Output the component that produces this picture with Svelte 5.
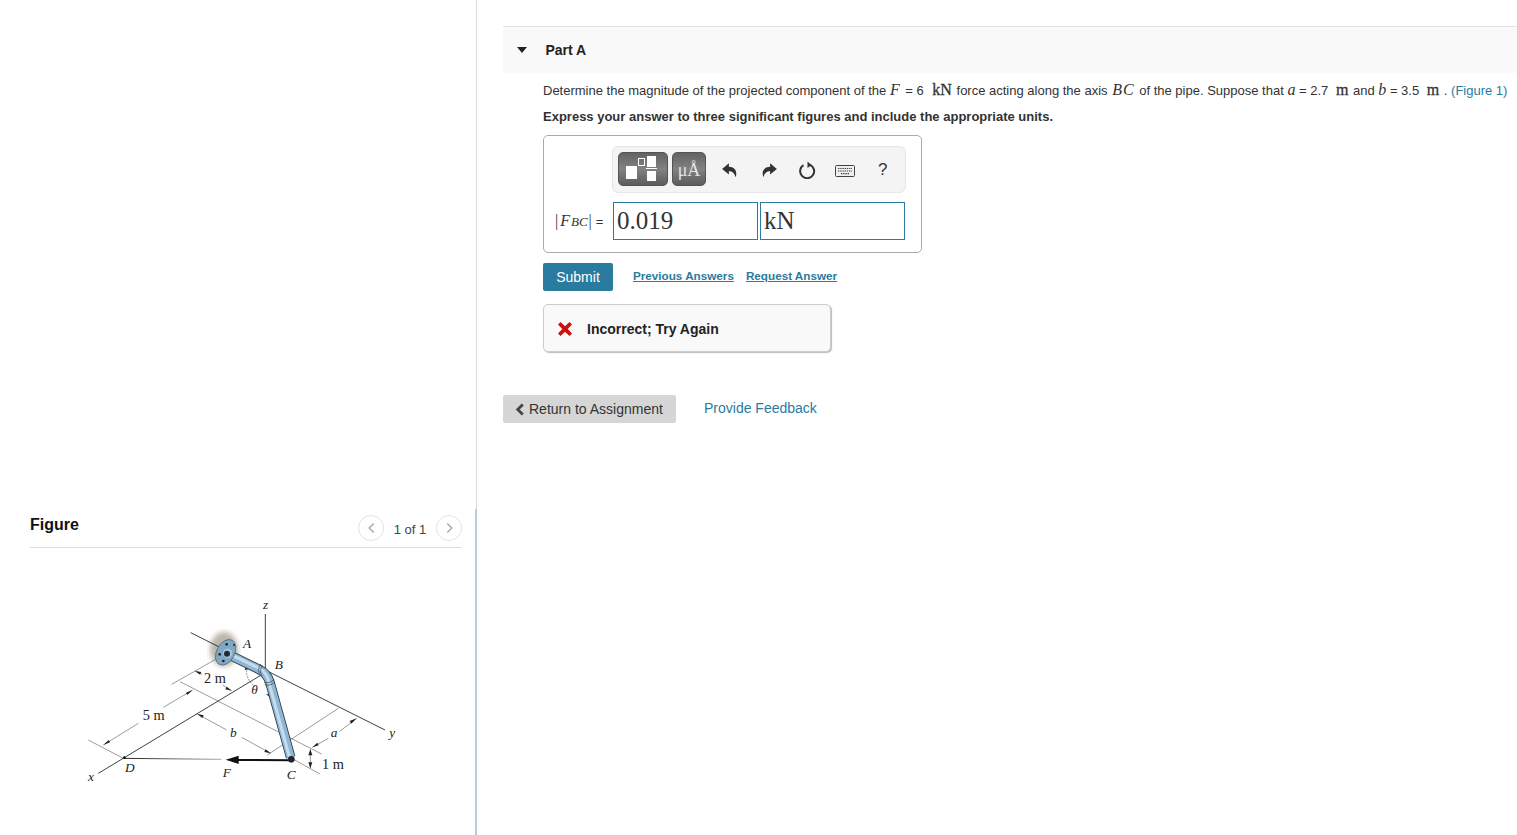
<script>
  const links = ['Previous Answers', 'Request Answer'];
</script>

<div class="page">
  <aside class="left">
    <section class="figure">
      <header class="fig_head">
        <h2>Figure</h2>
        <div class="pager">
          <span class="circle">
            <svg viewBox="0 0 12 16" width="9" height="12"><path d="M9 2 L3 8 L9 14" /></svg>
          </span>
          <span class="count">1 of 1</span>
          <span class="circle">
            <svg viewBox="0 0 12 16" width="9" height="12"><path d="M3 2 L9 8 L3 14" /></svg>
          </span>
        </div>
      </header>
      <svg class="diagram" viewBox="0 0 1050 600" width="350" height="200">
        <defs>
          <filter id="blur"><feGaussianBlur stdDeviation="8" /></filter>
          <linearGradient id="fade" x1="0" x2="1" y1="0" y2="0">
            <stop offset="0" stop-color="#222" />
            <stop offset="1" stop-color="#aaa" />
          </linearGradient>
        </defs>

        <ellipse cx="492" cy="178" rx="42" ry="52" fill="#7a6f5a" opacity="0.5" filter="url(#blur)" />

        <g class="thin">
          <path d="M85 450 L190 505" />
          <path d="M335 283 L472 205" />
          <path d="M130 465 L235 400 M310 352 L398 300" />
          <path d="M405 243 L426 253 M488 285 L515 302" />
          <path d="M360 275 L785 492" />
          <path d="M412 372 L500 420 M545 442 L632 490" />
          <path d="M622 495 L835 355" />
          <path d="M757 472 L805 445 M838 425 L890 385" />
          <path d="M695 505 L780 552" />
          <path d="M751 478 L751 535" />
        </g>

        <g class="axis">
          <path d="M616 72 L616 240" />
          <path d="M392 128 L975 420" />
          <path d="M115 550 L612 250" />
        </g>

        <g fill="#222">
          <path d="M130 465 L146 450 L150 457 Z" />
          <path d="M398 300 L382 315 L378 308 Z" />
          <path d="M405 243 L424 246 L420 254 Z" />
          <path d="M515 302 L496 298 L500 290 Z" />
          <path d="M412 372 L431 376 L427 384 Z" />
          <path d="M632 490 L613 486 L617 478 Z" />
          <path d="M757 472 L772 458 L776 466 Z" />
          <path d="M890 385 L874 401 L869 393 Z" />
          <path d="M751 478 L745 496 L757 496 Z" />
          <path d="M751 535 L745 517 L757 517 Z" />
          <path d="M618 312 L640 314 L628 320 Z" />
          <path d="M560 222 L554 240 L566 238 Z" />
        </g>
        <path d="M562 232 C555 255 565 275 585 290" fill="none" stroke="#333" stroke-width="1.5" stroke-dasharray="6 3" />

        <!-- pipe, dark edge then fill then highlight -->
        <path class="pipe edge" d="M505 193 L597 238 Q622 250 630 278 L692 502" />
        <path class="pipe fillin" d="M505 193 L597 238 Q622 250 630 278 L692 502" />
        <path class="pipe shine" d="M505 190 L596 234 Q621 247 627 279 L689 503" />
        <path d="M603 222 C594 232 594 245 600 254" fill="none" stroke="#334" stroke-width="2" />
        <path d="M608 226 C600 236 600 248 606 258" fill="none" stroke="#334" stroke-width="2" />
        <path d="M612 276 C622 280 634 278 642 268" fill="none" stroke="#334" stroke-width="2" />
        <path d="M614 284 C624 288 636 284 644 276" fill="none" stroke="#334" stroke-width="2" />

        <!-- flange -->
        <ellipse cx="497" cy="187" rx="27" ry="41" transform="rotate(28 497 187)" fill="#7fa8c5" stroke="#47606f" stroke-width="2" />
        <circle cx="503" cy="190" r="14" fill="#a9c7dc" />
        <circle cx="501" cy="191" r="9" fill="#1d2a33" />
        <circle cx="500" cy="163" r="4" fill="#223" />
        <circle cx="479" cy="193" r="4" fill="#223" />
        <circle cx="490" cy="213" r="4" fill="#223" />
        <circle cx="522" cy="165" r="3" fill="#223" />

        <!-- force F -->
        <path d="M190 505 L484 508" stroke="url(#fade)" stroke-width="3" fill="none" />
        <path d="M530 510 L695 511" stroke="#111" stroke-width="6" fill="none" />
        <path d="M497 509 L536 497 L536 522 Z" fill="#111" />
        <circle cx="694" cy="508" r="10" fill="#223" />
        <circle cx="193" cy="503" r="4" fill="#111" />

        <g class="it">
          <text x="609" y="58">z</text>
          <text x="549" y="175">A</text>
          <text x="644" y="237">B</text>
          <text x="574" y="311">θ</text>
          <text x="510" y="440">b</text>
          <text x="812" y="440">a</text>
          <text x="988" y="442">y</text>
          <text x="680" y="566">C</text>
          <text x="488" y="561">F</text>
          <text x="195" y="545">D</text>
          <text x="84" y="572">x</text>
        </g>
        <g class="rm">
          <text x="432" y="278">2 m</text>
          <text x="248" y="389">5 m</text>
          <text x="786" y="536">1 m</text>
        </g>
      </svg>
    </section>
  </aside>

  <main class="right">
    <div class="part_head">
      <span class="caret"></span>
      <h1>Part A</h1>
    </div>

    <div class="body">
      <p class="question">Determine the magnitude of the projected component of the <i class="m big">F</i> = 6 <b class="u kn">kN</b> force acting along the axis <i class="m big bc">BC</i> of the pipe. Suppose that <i class="m var">a</i> = 2.7 <b class="u">m</b> and <i class="m var">b</i> = 3.5 <b class="u">m</b> . <span class="fig_link">(Figure 1)</span></p>
      <p class="instr">Express your answer to three significant figures and include the appropriate units.</p>

      <div class="answer">
        <div class="toolbar">
          <span class="tbtn wide">
            <svg viewBox="0 0 50 34" width="50" height="34">
              <rect x="8" y="14" width="11" height="13" fill="#fff" />
              <rect x="20.5" y="6.5" width="6" height="7" fill="none" stroke="#fff" stroke-width="1" />
              <rect x="29" y="4" width="9" height="11" fill="#fff" />
              <rect x="28" y="16" width="11" height="1" fill="#fff" />
              <rect x="29" y="19" width="9" height="10" fill="#fff" />
            </svg>
          </span>
          <span class="tbtn unit">μÅ</span>
          <svg class="tool t1" viewBox="0 0 16 16" width="18" height="18"><path d="M7 2 L1 7 L7 12 V9 C10 9 12 10.5 13 14.5 C15 9 12 5 7 5 Z" /></svg>
          <svg class="tool t2" viewBox="0 0 16 16" width="18" height="18"><path d="M9 2 L15 7 L9 12 V9 C6 9 4 10.5 3 14.5 C1 9 4 5 9 5 Z" /></svg>
          <svg class="reset t3" viewBox="0 0 18 18" width="18" height="18"><path d="M5.5 4.2 A7 7 0 1 0 12 3.8" /><path class="fill" d="M9.5 0.5 L13.5 4 L9.5 7 Z" /></svg>
          <svg class="keys t4" viewBox="0 0 20 12" width="20" height="12">
            <rect x="0.5" y="0.5" width="19" height="11" rx="1" />
            <path d="M3 3.5 H17 M3 6 H17 M6 8.7 H14" stroke-dasharray="1.4 0.8" />
          </svg>
          <span class="help">?</span>
        </div>
        <div class="row">
          <span class="label">|<i class="f">F</i><i class="sub">BC</i><span class="bar">|</span><span class="eq">=</span></span>
          <input class="field" value="0.019" />
          <input class="field unit_in" value="kN" />
        </div>
      </div>

      <div class="actions">
        <button class="submit">Submit</button>
        {#each links as link}
          <a href="#top" class="small_link">{link}</a>
        {/each}
      </div>

      <div class="result">
        <svg viewBox="0 0 16 16" width="16" height="16"><path d="M1 3.5 L3.5 1 L8 5.2 L12.5 1 L15 3.5 L10.7 8 L15 12.5 L12.5 15 L8 10.8 L3.5 15 L1 12.5 L5.3 8 Z" /></svg>
        <span>Incorrect; Try Again</span>
      </div>
    </div>

    <div class="bottom">
      <button class="back">
        <svg viewBox="0 0 10 14" width="10" height="13"><path d="M8 1.5 L2.5 7 L8 12.5" /></svg>
        Return to Assignment
      </button>
      <a href="#top" class="feedback">Provide Feedback</a>
    </div>
  </main>
</div>

<style>
  :global(body) {
    margin: 0;
    overflow: hidden;
    background: #fff;
    font-family: "Liberation Sans", Arial, sans-serif;
    color: #333;
  }

  .page {
    display: flex;
    height: 835px;
  }

  .left {
    box-sizing: border-box;
    width: 477px;
    flex: none;
    display: flex;
    flex-direction: column;
    justify-content: flex-end;
    border-right: 1px solid #dcdcdc;
  }
  .figure {
    box-sizing: border-box;
    height: 326px;
    margin-right: -1px;
    padding: 6px 13px 0 30px;
    border-right: 2px solid #bccbdd;
  }
  .fig_head {
    display: flex;
    justify-content: space-between;
    align-items: flex-start;
    height: 32px;
    border-bottom: 1px solid #ddd;
  }
  h2 {
    margin: 1px 0 0;
    font-size: 16px;
    line-height: 18px;
    color: #111;
  }
  .pager {
    display: flex;
    align-items: center;
    font-size: 13px;
  }
  .count {
    width: 52px;
    text-align: center;
    color: #444;
    padding-top: 2px;
  }
  .circle {
    box-sizing: border-box;
    width: 26px;
    height: 26px;
    border: 1px solid #e2e2e2;
    border-radius: 50%;
    display: flex;
    align-items: center;
    justify-content: center;
  }
  .circle path {
    fill: none;
    stroke: #aaa;
    stroke-width: 2;
  }
  .diagram {
    display: block;
    margin: 42px 0 0 30px;
  }
  .thin path {
    fill: none;
    stroke: #444;
    stroke-width: 1.6;
  }
  .axis path {
    fill: none;
    stroke: #222;
    stroke-width: 2.6;
  }
  .pipe {
    fill: none;
  }
  .edge {
    stroke: #2a3a48;
    stroke-width: 29;
  }
  .fillin {
    stroke: #8fb6d2;
    stroke-width: 24;
  }
  .shine {
    stroke: #c4dcec;
    stroke-width: 9;
  }
  .it text, .rm text {
    font-family: "Liberation Serif", serif;
    fill: #222;
  }
  .it text {
    font-size: 40px;
    font-style: italic;
  }
  .rm text {
    font-size: 43px;
  }

  .right {
    flex: 1;
    min-width: 0;
    padding: 26px 0 0 26px;
  }
  .part_head {
    display: flex;
    align-items: center;
    height: 46px;
    background: #f9f9f9;
    border-top: 1px solid #e2e2e2;
  }
  .caret {
    width: 0;
    height: 0;
    margin-left: 14px;
    border-left: 5.5px solid transparent;
    border-right: 5.5px solid transparent;
    border-top: 6px solid #222;
  }
  h1 {
    margin: 0 0 0 18.5px;
    font-size: 14px;
    font-weight: bold;
    color: #222;
  }

  .body {
    padding-left: 40px;
  }
  .question {
    margin: 0;
    padding-top: 8px;
    font-size: 13px;
    line-height: 18px;
    white-space: nowrap;
    color: #333;
  }
  .m {
    font-family: "Liberation Serif", serif;
  }
  .big {
    font-size: 16px;
    margin-right: 1px;
    letter-spacing: 1px;
  }
  .bc {
    margin-left: 1px;
  }
  .var {
    font-size: 16px;
  }
  .u {
    font-family: "Liberation Serif", serif;
    font-size: 16px;
    font-weight: normal;
    margin: 0 1px 0 4px;
    -webkit-text-stroke: 0.3px #333;
  }
  .kn {
    margin-left: 5px;
  }
  .fig_link {
    color: #2a7ba0;
  }
  .instr {
    margin: 8px 0 0;
    font-size: 13px;
    line-height: 18px;
    font-weight: bold;
    color: #333;
  }

  .answer {
    box-sizing: border-box;
    width: 379px;
    height: 118px;
    margin-top: 9px;
    padding: 10px 16px 0 11px;
    border: 1px solid #aaa;
    border-radius: 5px;
  }
  .toolbar {
    box-sizing: border-box;
    display: flex;
    align-items: center;
    width: 294px;
    height: 47px;
    margin-left: 57px;
    padding: 0 5px;
    background: #f4f4f4;
    border: 1px solid #e6e6e6;
    border-radius: 6px;
  }
  .tbtn {
    box-sizing: border-box;
    display: flex;
    align-items: center;
    justify-content: center;
    height: 34px;
    margin-top: -1px;
    border: 1px solid #555;
    border-radius: 5px;
    background: linear-gradient(#636363, #828282 50%, #5c5c5c);
  }
  .wide {
    width: 50px;
  }
  .wide svg {
    flex: none;
  }
  .unit {
    width: 34px;
    margin-left: 4px;
    padding-top: 3px;
    color: #e4e4e4;
    font-family: "Liberation Serif", serif;
    font-size: 18px;
  }
  .tool {
    fill: #333;
  }
  .t1 { margin-left: 15px; }
  .t2 { margin-left: 21px; }
  .t3 { margin-left: 20px; }
  .t4 { margin-left: 19px; margin-top: 3px; }
  .reset path {
    fill: none;
    stroke: #333;
    stroke-width: 2;
  }
  .reset .fill {
    fill: #333;
    stroke: none;
  }
  .keys rect {
    fill: #eee;
    stroke: #444;
  }
  .keys path {
    fill: none;
    stroke: #444;
    stroke-width: 1.2;
  }
  .help {
    margin: 1px 0 0 23px;
    font-size: 17px;
    color: #333;
  }

  .row {
    display: flex;
    align-items: center;
    margin-top: 9px;
  }
  .label {
    width: 58px;
    flex: none;
    font-family: "Liberation Serif", serif;
    font-size: 16px;
    white-space: nowrap;
    color: #333;
  }
  .f {
    font-size: 16px;
    margin: 0 1px 0 2px;
  }
  .sub {
    font-size: 13px;
  }
  .bar {
    margin-left: 1px;
  }
  .eq {
    margin-left: 4px;
    font-family: "Liberation Sans", sans-serif;
    font-size: 13px;
  }
  .field {
    box-sizing: border-box;
    width: 145px;
    height: 38px;
    padding: 0 3px;
    border: 1px solid #2a7ba0;
    border-radius: 0;
    outline: none;
    font-family: "Liberation Serif", serif;
    font-size: 25px;
    color: #333;
    background: #fff;
  }
  .unit_in {
    margin-left: 2px;
  }

  .actions {
    display: flex;
    align-items: center;
    margin-top: 10px;
  }
  .submit {
    box-sizing: border-box;
    width: 70px;
    height: 28px;
    padding: 0;
    border: none;
    border-radius: 2px;
    background: #2a7ba0;
    color: #fff;
    font-family: inherit;
    font-size: 14px;
    margin-right: 20px;
  }
  .small_link {
    margin: -4px 12px 0 0;
    font-size: 11.7px;
    font-weight: bold;
    color: #2a7ba0;
  }

  .result {
    box-sizing: border-box;
    display: flex;
    align-items: center;
    width: 288px;
    height: 48px;
    margin-top: 13px;
    padding: 2px 0 0 13px;
    background: #f9f9f9;
    border: 1px solid #ccc;
    border-radius: 5px;
    box-shadow: 1px 1px 1px #bbb;
    font-size: 14px;
    font-weight: bold;
    color: #222;
  }
  .result svg {
    margin-right: 14px;
    fill: #cc0f0f;
  }

  .bottom {
    display: flex;
    align-items: center;
    margin-top: 43px;
  }
  .back {
    box-sizing: border-box;
    display: flex;
    align-items: center;
    gap: 4px;
    width: 173px;
    height: 28px;
    padding: 0 0 0 12px;
    border: none;
    border-radius: 2px;
    background: #d6d6d6;
    font-family: inherit;
    font-size: 14px;
    color: #333;
  }
  .back path {
    fill: none;
    stroke: #444;
    stroke-width: 3;
  }
  .feedback {
    margin-left: 28px;
    font-size: 14px;
    color: #2a7ba0;
    text-decoration: none;
    margin-top: -2px;
  }
</style>
